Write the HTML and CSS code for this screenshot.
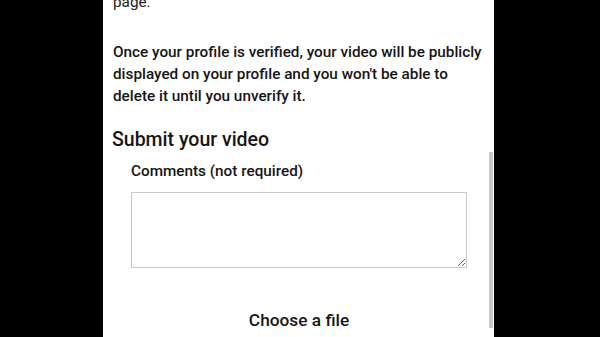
FILE: index.html
```
<!DOCTYPE html>
<html lang="en">
<head>
    <meta charset="UTF-8">
    <meta name="viewport" content="width=device-width, initial-scale=1.0">
    <title>Verify your profile</title>
    <link rel="stylesheet" href="styles.css">
</head>
<body>
    <div id="page">
        <!-- 上一段的最后一行, 已经滚出视窗 -->
        <p class="tail">page.</p>
        <p class="note">Once your profile is verified, your video will be publicly displayed on your profile and you won't be able to delete it until you unverify it.</p>

        <h2 class="title">Submit your video</h2>
        <div class="form">
            <label class="label" for="comments">Comments (not required)</label>
            <textarea id="comments" class="comments"></textarea>
            <div class="choose">Choose a file</div>
        </div>

        <!-- 浮动滚动条 -->
        <div class="scrollbar"></div>
    </div>
</body>
</html>
```

FILE: styles.css
```
html,body{
    height: 100%;
}
body{
    margin: 0;
    background-color: black;
    overflow: hidden;
    font-family: Roboto, "Liberation Sans", sans-serif;
    color: #151515;
}
#page{
    position: relative;
    width: 391px;
    height: 100%;
    margin-left: 103px;
    background-color: white;
    padding: 0 7px 0 10px;
    box-sizing: border-box;
    /* 防止第一段的负边距穿透出去 */
    overflow: hidden;
}
.tail{
    margin: -9px 0 0;
    font-size: 15.3px;
    line-height: 22px;
    color: #222;
}
.note{
    margin: 28px 0 0;
    font-size: 15.3px;
    line-height: 22px;
    font-weight: 500;
}
.title{
    margin: 21px 0 0 -1px;
    font-size: 19.5px;
    line-height: 24px;
    font-weight: 500;
}
.form{
    /* 表单内容比正文再缩进一些 */
    margin: 9px -7px 0 -10px;
    padding: 0 27px 0 28px;
}
.label{
    display: block;
    font-size: 15.3px;
    line-height: 20px;
    font-weight: 500;
}
.comments{
    display: block;
    width: 100%;
    height: 76px;
    margin-top: 11px;
    border: 1px solid #c8c8c8;
    box-sizing: border-box;
    font-family: inherit;
}
.choose{
    margin-top: 40px;
    text-align: center;
    font-size: 17.3px;
    line-height: 24px;
    font-weight: 500;
}
.scrollbar{
    position: absolute;
    top: 152px;
    right: 1px;
    width: 4px;
    height: 176px;
    background-color: #c8c8c8;
}
```
